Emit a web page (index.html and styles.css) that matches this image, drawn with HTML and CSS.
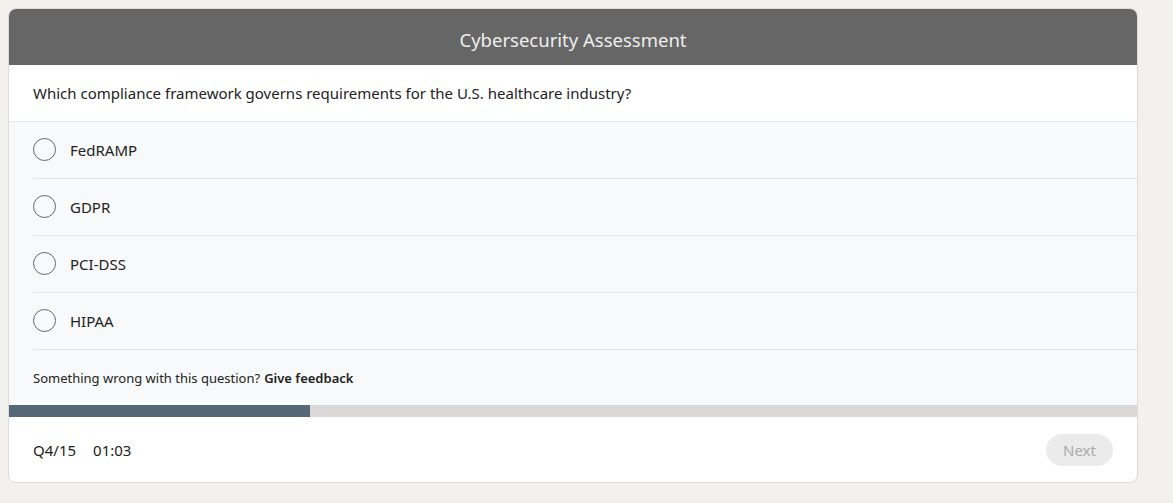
FILE: index.html
```html
<!DOCTYPE html>
<html lang="en">
<head>
  <meta charset="UTF-8">
  <title>Cybersecurity Assessment</title>
  <link rel="stylesheet" href="styles.css">
</head>
<body>
  <div class="quiz">
    <div class="quiz-header">Cybersecurity Assessment</div>
    <div class="question">Which compliance framework governs requirements for the U.S. healthcare industry?</div>
    <div class="options">
      <label class="option"><span class="radio"></span>FedRAMP</label>
      <label class="option"><span class="radio"></span>GDPR</label>
      <label class="option"><span class="radio"></span>PCI-DSS</label>
      <label class="option"><span class="radio"></span>HIPAA</label>
    </div>
    <div class="feedback">Something wrong with this question? <a href="#">Give feedback</a></div>
    <div class="progress"><div class="progress-fill" style="width: 26.67%"></div></div>
    <div class="quiz-footer">
      <div class="status"><span>Q4/15</span><span>01:03</span></div>
      <button class="next" disabled>Next</button>
    </div>
  </div>
</body>
</html>
```

FILE: styles.css
```css
body {
  margin: 0;
  padding: 8px;
  background: #f2f1ee;
  font-family: "Noto Sans", "Open Sans", sans-serif;
  color: #222;
}
.quiz {
  width: 1128px;
  background: #fff;
  border: 1px solid #dcdcdc;
  border-radius: 8px;
  overflow: hidden;
}
.quiz-header {
  height: 56px;
  padding-top: 4px;
  box-sizing: border-box;
  background: #666;
  color: #eee;
  font-size: 18.5px;
  display: flex;
  align-items: center;
  justify-content: center;
}
.question {
  height: 56px;
  padding: 0 24px;
  display: flex;
  align-items: center;
  font-size: 15px;
  border-bottom: 1px solid #e6e6e6;
}
.options {
  background: #f8f9fa;
}
.option {
  height: 56px;
  margin-left: 24px;
  display: flex;
  align-items: center;
  font-size: 15px;
  border-bottom: 1px solid #e4e4e4;
  cursor: pointer;
}
.radio {
  width: 21px;
  height: 21px;
  margin-top: -2px;
  border: 1.5px solid #666;
  border-radius: 50%;
  margin-right: 14px;
}
.feedback {
  height: 55px;
  background: #f8f9fa;
  padding: 0 24px;
  display: flex;
  align-items: center;
  font-size: 13px;
}
.feedback a {
  color: #222;
  font-weight: 600;
  text-decoration: none;
  margin-left: 4px;
}
.progress {
  height: 12px;
  background: #d9d9d9;
}
.progress-fill {
  height: 100%;
  background: #566778;
}
.quiz-footer {
  height: 65px;
  padding: 0 24px;
  display: flex;
  align-items: center;
  justify-content: space-between;
  font-size: 15px;
}
.status span {
  margin-right: 17px;
}
.next {
  width: 67px;
  height: 32px;
  border: none;
  border-radius: 16px;
  background: #ebebeb;
  color: #aaa;
  font-family: inherit;
  font-size: 15px;
}
```
